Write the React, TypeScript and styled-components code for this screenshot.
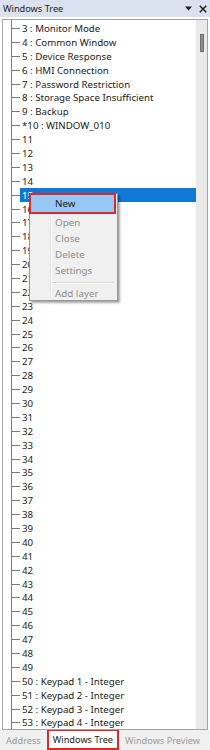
import styled, { createGlobalStyle } from "styled-components";

const GlobalStyle = createGlobalStyle`
  html, body {
    margin: 0;
    padding: 0;
    background: #ffffff;
  }
  body {
    font-family: "Noto Sans", "Open Sans", sans-serif;
    color: #1b1b1b;
  }
`;

const ROW_H = 13.9;

const named: Record<number, string> = {
  3: "Monitor Mode",
  4: "Common Window",
  5: "Device Response",
  6: "HMI Connection",
  7: "Password Restriction",
  8: "Storage Space Insufficient",
  9: "Backup",
  10: "WINDOW_010",
  50: "Keypad 1 - Integer",
  51: "Keypad 2 - Integer",
  52: "Keypad 3 - Integer",
  53: "Keypad 4 - Integer",
};

const rows = Array.from({ length: 51 }, (_, i) => {
  const id = i + 3;
  const prefix = id === 10 ? "*" : "";
  return { id, text: named[id] ? `${prefix}${id} : ${named[id]}` : `${id}` };
});

const menuItems = [
  { label: "Open" },
  { label: "Close" },
  { label: "Delete" },
  { label: "Settings" },
];

const Panel = styled.div`
  width: 210px;
  height: 750px;
  display: flex;
  flex-direction: column;
  background: #ffffff;
  overflow: hidden;
`;

const TitleBar = styled.div`
  height: 17px;
  flex: none;
  display: flex;
  align-items: center;
  justify-content: space-between;
  padding: 0 3px 0 3px;
  background: #d9e2ee;
  font-size: 9.2px;
  color: #1e1e1e;
`;

const TitleButtons = styled.div`
  display: flex;
  align-items: center;
  gap: 7px;
`;

const Frame = styled.div`
  flex: 1;
  min-height: 0;
  margin: 2px 2px 0 2px;
  border: 1px solid #a3a3a3;
  display: flex;
  position: relative;
  overflow: hidden;
`;

const Tree = styled.div`
  flex: 1;
  position: relative;
  padding-top: 1px;
  overflow: hidden;

  &::before {
    content: "";
    position: absolute;
    left: 8px;
    top: 0;
    bottom: 0;
    width: 1px;
    background: #7a7a7a;
  }
`;

const Row = styled.div`
  height: ${ROW_H}px;
  position: relative;
  padding-left: 17px;
  display: flex;
  align-items: center;

  &::before {
    content: "";
    position: absolute;
    left: 8px;
    top: 50%;
    width: 9px;
    height: 1px;
    background: #7a7a7a;
  }
`;

const Label = styled.div<{ $selected?: boolean }>`
  flex: 1;
  height: 100%;
  display: flex;
  align-items: center;
  padding-left: 2px;
  padding-top: 1px;
  box-sizing: border-box;
  font-size: 9.7px;
  white-space: nowrap;
  color: ${(p) => (p.$selected ? "#ffffff" : "#1b1b1b")};
  background: ${(p) => (p.$selected ? "#1278d6" : "transparent")};
`;

const ScrollTrack = styled.div`
  width: 11px;
  flex: none;
  background: #e9e9e9;
  position: relative;
  display: flex;
  justify-content: center;
  padding-top: 14px;
  box-sizing: border-box;
`;

const Thumb = styled.div`
  width: 4px;
  height: 18px;
  box-sizing: border-box;
  background: #8e8e8e;
  border: 1px solid #6f6f6f;
`;

const Menu = styled.div`
  position: absolute;
  left: 26px;
  top: 173px;
  width: 89px;
  box-sizing: border-box;
  background: #f0f0f0;
  border: 1px solid #979797;
  box-shadow: 2px 2px 2px rgba(0, 0, 0, 0.35);
  display: flex;
  flex-direction: column;

  &::before {
    content: "";
    position: absolute;
    left: 20px;
    top: 21px;
    bottom: 2px;
    width: 1px;
    background: #e2e2e2;
    box-shadow: 1px 0 0 #ffffff;
  }
`;

const MenuItem = styled.div<{ $active?: boolean }>`
  height: ${(p) => (p.$active ? 21 : 16)}px;
  box-sizing: border-box;
  display: flex;
  align-items: center;
  font-size: 9.8px;
  padding-left: ${(p) => (p.$active ? 24 : 25)}px;
  color: ${(p) => (p.$active ? "#1b1b1b" : "#8d8d8d")};
  ${(p) =>
    p.$active &&
    `
    width: 87px;
    margin: -1px 0 0 -1px;
    background: #96c8f3;
    border: 2px solid #e3262c;
  `}
`;

const MenuSeparator = styled.div`
  height: 8px;
  display: flex;
  align-items: center;
  padding-left: 23px;
  padding-right: 3px;

  &::after {
    content: "";
    flex: 1;
    height: 1px;
    background: #d5d5d5;
    box-shadow: 0 1px 0 #ffffff;
  }
`;

const TabStrip = styled.div`
  height: 20px;
  flex: none;
  display: flex;
  align-items: stretch;
  padding-left: 2px;
  gap: 2px;
  background: #f0f0f0;
  font-size: 9.2px;
`;

const Tab = styled.div<{ $active?: boolean }>`
  display: flex;
  align-items: center;
  padding: 0 4px;
  white-space: nowrap;
  color: ${(p) => (p.$active ? "#1b1b1b" : "#9a9a9a")};
  ${(p) =>
    p.$active &&
    `
    background: #ffffff;
    border: 2px solid #e3262c;
    margin-top: -1px;
  `}
`;

const DropIcon = () => (
  <svg width="7" height="5" viewBox="0 0 7 5">
    <polygon points="0,0.5 7,0.5 3.5,4.5" fill="#1e1e1e" />
  </svg>
);

const CloseIcon = () => (
  <svg width="8" height="8" viewBox="0 0 8 8">
    <path d="M0.8 0.8 L7.2 7.2 M7.2 0.8 L0.8 7.2" stroke="#1e1e1e" strokeWidth="1.5" />
  </svg>
);

export default function App() {
  return (
    <>
      <GlobalStyle />
      <Panel>
        <TitleBar>
          <span>Windows Tree</span>
          <TitleButtons>
            <DropIcon />
            <CloseIcon />
          </TitleButtons>
        </TitleBar>
        <Frame>
          <Tree>
            {rows.map((r) => (
              <Row key={r.id}>
                <Label $selected={r.id === 15}>{r.text}</Label>
              </Row>
            ))}
          </Tree>
          <ScrollTrack>
            <Thumb />
          </ScrollTrack>
          <Menu>
            <MenuItem $active>New</MenuItem>
            {menuItems.map((m) => (
              <MenuItem key={m.label}>{m.label}</MenuItem>
            ))}
            <MenuSeparator />
            <MenuItem style={{ height: 14 }}>Add layer</MenuItem>
          </Menu>
        </Frame>
        <TabStrip>
          <Tab>Address</Tab>
          <Tab $active>Windows Tree</Tab>
          <Tab>Windows Preview</Tab>
        </TabStrip>
      </Panel>
    </>
  );
}
